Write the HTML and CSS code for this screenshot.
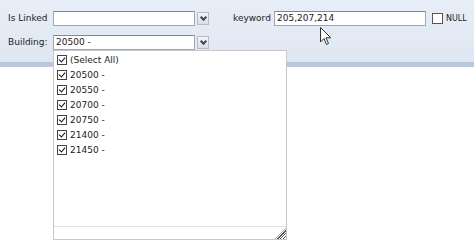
FILE: index.html
```html
<!DOCTYPE html>
<html>
<head>
    <title>Filter</title>
    <link rel="stylesheet" href="styles.css">
</head>
<body>

    <div class="panel">
        <div class="row">
            <label class="lbl">Is Linked</label>
            <div class="combo"><input type="text" class="box"><span class="arrow"></span></div>
            <label class="lbl kw">keyword</label>
            <input type="text" class="box wide" value="205,207,214">
            <span class="chk"></span><span class="null">NULL</span>
        </div>
        <div class="row">
            <label class="lbl">Building:</label>
            <div class="combo"><input type="text" class="box" value="20500 -"><span class="arrow"></span></div>
        </div>
    </div>

    <div class="droplist">
        <ul class="items">
            <li><span class="chk on"></span>(Select All)</li>
            <li><span class="chk on"></span>20500 -</li>
            <li><span class="chk on"></span>20550 -</li>
            <li><span class="chk on"></span>20700 -</li>
            <li><span class="chk on"></span>20750 -</li>
            <li><span class="chk on"></span>21400 -</li>
            <li><span class="chk on"></span>21450 -</li>
        </ul>
        <div class="foot"><span class="grip"></span></div>
    </div>

    <svg class="cursor" width="12" height="19" viewBox="0 0 12 19">
        <path d="M0.5 0.5 L0.5 15 L4 11.5 L6.5 17.5 L8.5 16.5 L6 10.8 L10.8 10.8 Z" fill="#fff" stroke="#333" stroke-width="1"/>
    </svg>

</body>
</html>
```

FILE: styles.css
```css
body {
    margin: 0;
    font-family: "DejaVu Sans", Verdana, sans-serif;
    font-size: 9px;
    color: #222;
    background: #fff;
}

.panel {
    height: 62px;
    background: linear-gradient(#e8eef7, #dfe7f2);
    border-bottom: 5px solid #b6c8de;
    padding-left: 8px;
}

.row {
    display: flex;
    align-items: center;
    height: 24px;
}

.row:first-child {
    padding-top: 6px;
}

.lbl {
    width: 45px;
}

.kw {
    width: 41px;
    margin-left: 24px;
}

.combo {
    display: flex;
    align-items: center;
}

.box {
    width: 142px;
    height: 15px;
    box-sizing: border-box;
    border: 1px solid #9ea7b3;
    border-top-color: #7f8894;
    background: #fff;
    padding: 0 2px;
    font-family: inherit;
    font-size: 9px;
    color: #222;
    margin: 0;
}

.wide {
    width: 152px;
}

.arrow {
    width: 12px;
    height: 13px;
    box-sizing: border-box;
    margin-left: 2px;
    border: 1px solid #b5bcc6;
    background: linear-gradient(#f4f5f7, #d9dde3);
    position: relative;
}

.arrow::after {
    content: "";
    position: absolute;
    left: 3px;
    top: 2px;
    width: 3px;
    height: 3px;
    border-right: 2px solid #445;
    border-bottom: 2px solid #445;
    transform: rotate(45deg);
}

.chk {
    display: inline-block;
    width: 11px;
    height: 11px;
    box-sizing: border-box;
    border: 1px solid #555;
    background: #fff;
    margin-left: 6px;
    position: relative;
}

.null {
    margin-left: 3px;
    font-size: 8px;
}

.droplist {
    position: absolute;
    left: 53px;
    top: 50px;
    width: 234px;
    height: 190px;
    box-sizing: border-box;
    border: 1px solid #c8c8c8;
    background: #fff;
    display: flex;
    flex-direction: column;
}

.items {
    list-style: none;
    margin: 0;
    padding: 1px 0 0 0;
    flex: 1;
}

.items li {
    height: 15px;
    display: flex;
    align-items: center;
    font-size: 9px;
}

.items .chk {
    width: 10px;
    height: 10px;
    margin: 0 3px 0 3px;
    border-color: #444;
}

.chk.on::after {
    content: "";
    position: absolute;
    left: 2px;
    top: 0px;
    width: 3px;
    height: 5px;
    border-right: 1.5px solid #111;
    border-bottom: 1.5px solid #111;
    transform: rotate(40deg);
}

.foot {
    height: 12px;
    border-top: 1px solid #e2e2e2;
    position: relative;
}

.grip {
    position: absolute;
    right: 0;
    bottom: 0;
    width: 11px;
    height: 11px;
    background: repeating-linear-gradient(135deg, transparent 0 1px, #555 1px 2px);
    clip-path: polygon(100% 0, 100% 100%, 0 100%);
}

.cursor {
    position: absolute;
    left: 320px;
    top: 27px;
}
```
